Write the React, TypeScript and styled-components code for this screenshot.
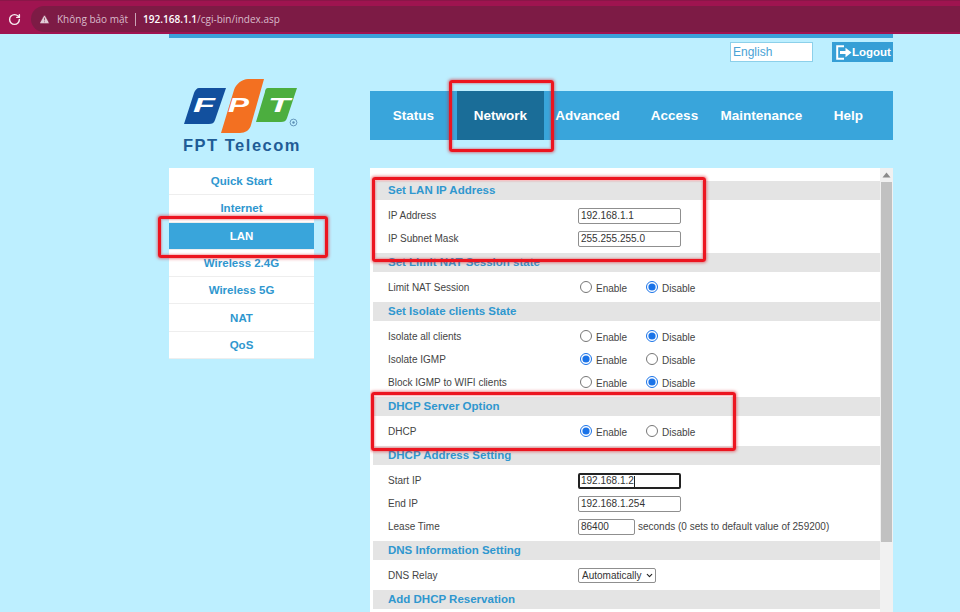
import React from 'react';
import styled, { createGlobalStyle } from 'styled-components';
import { RotateCw, TriangleAlert, ChevronDown } from 'lucide-react';

const Global = createGlobalStyle`
  html, body { margin: 0; padding: 0; background: #bdefff; }
  body { font-family: "Liberation Sans", Arial, sans-serif; }
  * { box-sizing: border-box; }
`;

const Screen = styled.div`
  width: 960px;
  height: 612px;
  overflow: hidden;
  background: #bdefff;
`;

const BrowserBar = styled.div`
  height: 34px;
  padding: 5px 0 2px 0;
  display: flex;
  align-items: stretch;
  background: #9f1450;
  border-top: 1px solid #8a1648;
`;

const ReloadSlot = styled.div`
  width: 31px;
  padding-right: 3px;
  display: flex;
  align-items: center;
  justify-content: center;
  color: #f6ecf0;
`;

const AddressPill = styled.div`
  flex: 1;
  display: flex;
  align-items: center;
  padding-left: 8px;
  border-radius: 13px 0 0 13px;
  background: #7d1b45;
  font-family: "Open Sans", "Noto Sans", sans-serif;
  font-size: 10px;
  color: #d9bccb;
`;

const WarnIcon = styled.span`
  display: flex;
  color: #e0cdd6;
  margin-right: 7px;
`;

const Divider = styled.span`
  width: 1px;
  height: 13px;
  background: #c9a5b6;
  margin: 0 7px 0 7px;
`;

const Host = styled.span`
  color: #fff;
  font-weight: 600;
`;

const Page = styled.div`
  width: 724px;
  margin-left: 169px;
`;

const TopStrip = styled.div`
  height: 4px;
  background: #3aa2d9;
`;

const Header = styled.div`
  display: grid;
  grid-template-columns: 145px 523px;
  column-gap: 56px;
  height: 130px;
`;

const LogoBlock = styled.div`
  padding-top: 41px;
  display: flex;
  flex-direction: column;
  align-items: center;
  margin-left: -1px;
`;

const LogoCaption = styled.div`
  margin: 1px 0 0 2px;
  font-size: 16.5px;
  line-height: 18px;
  font-weight: 700;
  letter-spacing: 1.5px;
  color: #1f5c96;
  white-space: nowrap;
`;

const HeaderRight = styled.div`
  display: flex;
  flex-direction: column;
`;

const UtilRow = styled.div`
  margin-top: 4px;
  height: 20px;
  display: flex;
  justify-content: flex-end;
  gap: 19px;
`;

const LanguageBox = styled.div`
  width: 83px;
  height: 20px;
  padding-left: 2px;
  background: #fff;
  border: 1px solid #8cd0ea;
  font-size: 12px;
  line-height: 18px;
  color: #4aa3d6;
`;

const LogoutButton = styled.div`
  width: 61px;
  height: 20px;
  display: flex;
  align-items: center;
  padding-left: 4px;
  background: #369fd6;
  color: #fff;
  font-size: 11.5px;
  font-weight: 700;
  white-space: nowrap;
`;

const Nav = styled.nav`
  margin-top: 29px;
  height: 49px;
  display: grid;
  grid-template-columns: repeat(6, 87px);
  background: #39a5db;
  position: relative;
`;

const NavItem = styled.div<{ $active?: boolean }>`
  display: flex;
  align-items: center;
  justify-content: center;
  font-size: 13.5px;
  font-weight: 700;
  color: #fff;
  background: ${(p) => (p.$active ? '#1a6d98' : 'transparent')};
`;

const Body = styled.div`
  display: grid;
  grid-template-columns: 145px 523px;
  column-gap: 56px;
  align-items: start;
`;

const Sidebar = styled.ul`
  position: relative;
  list-style: none;
  margin: 0;
  padding: 0;
  background: #fff;
`;

const SideItem = styled.li<{ $active?: boolean }>`
  height: 27.3px;
  display: flex;
  align-items: center;
  justify-content: center;
  font-size: 11.5px;
  font-weight: 700;
  color: ${(p) => (p.$active ? '#fff' : '#2f97cf')};
  background: ${(p) => (p.$active ? '#39a5db' : '#fff')};
  border-bottom: 1px solid #eeeeee;
  &:last-child { border-bottom: none; }
`;

const Panel = styled.div`
  position: relative;
  height: 444px;
  display: flex;
  background: #fff;
  overflow: hidden;
`;

const PanelContent = styled.div`
  flex: 1;
  padding: 13px 0 0 3px;
  min-width: 0;
`;

const Section = styled.section``;

const SectionHead = styled.h3`
  margin: 0;
  height: 19px;
  width: 507px;
  padding-left: 15px;
  background: #e4e4e4;
  font-size: 11.5px;
  line-height: 19px;
  font-weight: 700;
  color: #2f97cf;
`;

const SectionBody = styled.div`
  padding: 4px 0 3px 15px;
`;

const Row = styled.div`
  height: 23px;
  display: flex;
  align-items: center;
`;

const Label = styled.div`
  width: 190px;
  font-size: 10px;
  color: #444;
`;

const TextField = styled.input<{ $w?: number; $focus?: boolean }>`
  width: ${(p) => p.$w ?? 103}px;
  height: 16px;
  padding: 0 ${(p) => (p.$focus ? 1 : 2)}px;
  font-family: "Liberation Sans", Arial, sans-serif;
  font-size: 10px;
  color: #333;
  background: #fff;
  border: ${(p) => (p.$focus ? '2px solid #222' : '1px solid #8f8f8f')};
  border-radius: 2px;
  outline: none;
`;

const FieldWrap = styled.div`
  position: relative;
  display: flex;
`;

const Caret = styled.span`
  position: absolute;
  left: 56px;
  top: 3px;
  width: 1px;
  height: 11px;
  background: #222;
`;

const Hint = styled.span`
  margin-left: 3px;
  font-size: 10px;
  color: #444;
  white-space: nowrap;
`;

const RadioOption = styled.label`
  width: 66px;
  display: flex;
  align-items: center;
  font-size: 10px;
  color: #444;
  padding-left: 2px;
`;

const RadioInput = styled.input`
  width: 12px;
  height: 12px;
  margin: -2px 4px 0 0;
  accent-color: #1a73e8;
`;

const RadioText = styled.span`
  position: relative;
  top: 1px;
`;

const SelectWrap = styled.div`
  position: relative;
  display: flex;
  width: 78px;
  height: 15px;
`;

const SelectField = styled.select`
  appearance: none;
  width: 100%;
  height: 100%;
  padding: 0 0 0 3px;
  font-family: "Liberation Sans", Arial, sans-serif;
  font-size: 10px;
  color: #333;
  background: #fff;
  border: 1px solid #8f8f8f;
  border-radius: 2px;
`;

const SelectArrow = styled.span`
  position: absolute;
  right: 2px;
  top: 3px;
  display: flex;
  color: #222;
  pointer-events: none;
`;

const Scrollbar = styled.div`
  width: 13px;
  flex: none;
  display: flex;
  flex-direction: column;
  align-items: center;
  background: #f1f1f1;
`;

const ScrollUp = styled.div`
  height: 14px;
  display: flex;
  align-items: center;
  justify-content: center;
`;

const ScrollThumb = styled.div`
  width: 11px;
  height: 360px;
  background: #c1c1c1;
`;

const RedBox = styled.div<{ $l: number; $t: number; $w: number; $h: number }>`
  position: absolute;
  left: ${(p) => p.$l}px;
  top: ${(p) => p.$t}px;
  width: ${(p) => p.$w}px;
  height: ${(p) => p.$h}px;
  border: 3px solid #ec1520;
  border-radius: 3px;
  box-shadow: 0 0 3px 1px rgba(220, 20, 30, 0.5), inset 0 0 2px 1px rgba(220, 20, 30, 0.35);
  pointer-events: none;
  z-index: 2;
`;

const Letter = styled.text`
  font-family: "Liberation Sans", sans-serif;
  font-size: 20px;
  font-weight: 700;
  font-style: italic;
  fill: #fff;
`;

const FptLogo = () => (
  <svg width="114" height="56" viewBox="0 0 114 56" aria-label="FPT logo">
    <path d="M15 9h27L31 41c-1 3-3 4-6 4H0L10 14c1-3 3-5 5-5z" fill="#12509e" />
    <path d="M79 0h1L67 46c-1 5-6 8-11 8H37L50 11c2-6 8-11 14-11z" fill="#f37021" />
    <path d="M84 9h29l-10 30c-1 3-3 4-6 4H72L81 13c0-2 1-4 3-4z" fill="#4cae3f" />
    <Letter x="9" y="33" textLength="22" lengthAdjust="spacingAndGlyphs">F</Letter>
    <Letter x="44" y="33" textLength="21" lengthAdjust="spacingAndGlyphs">P</Letter>
    <Letter x="84" y="33" textLength="22" lengthAdjust="spacingAndGlyphs">T</Letter>
    <circle cx="109.5" cy="43.5" r="3.4" fill="none" stroke="#5b8fb5" strokeWidth="0.9" />
    <circle cx="109.5" cy="43.5" r="1.2" fill="#5b8fb5" />
  </svg>
);

const LogoutIcon = () => (
  <svg width="16" height="15" viewBox="0 0 16 15">
    <path d="M8 1.2H1.2v12.6H8" fill="none" stroke="#fff" strokeWidth="2" />
    <path d="M4 6h5.5V2.8L15.5 7.5l-6 4.7V9H4z" fill="#fff" />
  </svg>
);

const ScrollArrow = () => (
  <svg width="9" height="6" viewBox="0 0 9 6">
    <path d="M4.5 0.5 8.5 5.5H0.5z" fill="#8a8a8a" />
  </svg>
);

const Radios = ({ on, name }: { on: 'Enable' | 'Disable'; name: string }) => (
  <>
    {(['Enable', 'Disable'] as const).map((v) => (
      <RadioOption key={v}>
        <RadioInput type="radio" name={name} defaultChecked={on === v} />
        <RadioText>{v}</RadioText>
      </RadioOption>
    ))}
  </>
);

const navItems = ['Status', 'Network', 'Advanced', 'Access', 'Maintenance', 'Help'];
const sideItems = ['Quick Start', 'Internet', 'LAN', 'Wireless 2.4G', 'Wireless 5G', 'NAT', 'QoS'];

export default function App() {
  return (
    <Screen>
      <Global />
      <BrowserBar>
        <ReloadSlot><RotateCw size={13} strokeWidth={2.6} /></ReloadSlot>
        <AddressPill>
          <WarnIcon><TriangleAlert size={11} fill="#e0cdd6" stroke="#7d1b45" strokeWidth={1.5} /></WarnIcon>
          Không bảo mật
          <Divider />
          <Host>192.168.1.1</Host>/cgi-bin/index.asp
        </AddressPill>
      </BrowserBar>
      <Page>
        <TopStrip />
        <Header>
          <LogoBlock>
            <FptLogo />
            <LogoCaption>FPT Telecom</LogoCaption>
          </LogoBlock>
          <HeaderRight>
            <UtilRow>
              <LanguageBox>English</LanguageBox>
              <LogoutButton><LogoutIcon />Logout</LogoutButton>
            </UtilRow>
            <Nav>
              {navItems.map((n) => (
                <NavItem key={n} $active={n === 'Network'}>{n}</NavItem>
              ))}
              <RedBox $l={79} $t={-11} $w={105} $h={72} />
            </Nav>
          </HeaderRight>
        </Header>
        <Body>
          <Sidebar>
            {sideItems.map((s) => (
              <SideItem key={s} $active={s === 'LAN'}>{s}</SideItem>
            ))}
            <RedBox $l={-11} $t={48} $w={170} $h={42} />
          </Sidebar>
          <Panel>
            <PanelContent>
              <Section>
                <SectionHead>Set LAN IP Address</SectionHead>
                <SectionBody>
                  <Row><Label>IP Address</Label><TextField readOnly value="192.168.1.1" /></Row>
                  <Row><Label>IP Subnet Mask</Label><TextField readOnly value="255.255.255.0" /></Row>
                </SectionBody>
              </Section>
              <Section>
                <SectionHead>Set Limit NAT Session state</SectionHead>
                <SectionBody>
                  <Row><Label>Limit NAT Session</Label><Radios name="nat" on="Disable" /></Row>
                </SectionBody>
              </Section>
              <Section>
                <SectionHead>Set Isolate clients State</SectionHead>
                <SectionBody>
                  <Row><Label>Isolate all clients</Label><Radios name="iso" on="Disable" /></Row>
                  <Row><Label>Isolate IGMP</Label><Radios name="igmp" on="Enable" /></Row>
                  <Row><Label>Block IGMP to WIFI clients</Label><Radios name="block" on="Disable" /></Row>
                </SectionBody>
              </Section>
              <Section>
                <SectionHead>DHCP Server Option</SectionHead>
                <SectionBody>
                  <Row><Label>DHCP</Label><Radios name="dhcp" on="Enable" /></Row>
                </SectionBody>
              </Section>
              <Section>
                <SectionHead>DHCP Address Setting</SectionHead>
                <SectionBody>
                  <Row>
                    <Label>Start IP</Label>
                    <FieldWrap>
                      <TextField readOnly value="192.168.1.2" $focus />
                      <Caret />
                    </FieldWrap>
                  </Row>
                  <Row><Label>End IP</Label><TextField readOnly value="192.168.1.254" /></Row>
                  <Row>
                    <Label>Lease Time</Label>
                    <TextField readOnly value="86400" $w={57} />
                    <Hint>seconds (0 sets to default value of 259200)</Hint>
                  </Row>
                </SectionBody>
              </Section>
              <Section>
                <SectionHead>DNS Information Setting</SectionHead>
                <SectionBody>
                  <Row>
                    <Label>DNS Relay</Label>
                    <SelectWrap>
                      <SelectField defaultValue="auto"><option value="auto">Automatically</option></SelectField>
                      <SelectArrow><ChevronDown size={9} strokeWidth={3} /></SelectArrow>
                    </SelectWrap>
                  </Row>
                </SectionBody>
              </Section>
              <Section>
                <SectionHead>Add DHCP Reservation</SectionHead>
              </Section>
            </PanelContent>
            <Scrollbar>
              <ScrollUp><ScrollArrow /></ScrollUp>
              <ScrollThumb />
            </Scrollbar>
            <RedBox $l={2} $t={9} $w={334} $h={85} />
            <RedBox $l={1} $t={224} $w={365} $h={59} />
          </Panel>
        </Body>
      </Page>
    </Screen>
  );
}
